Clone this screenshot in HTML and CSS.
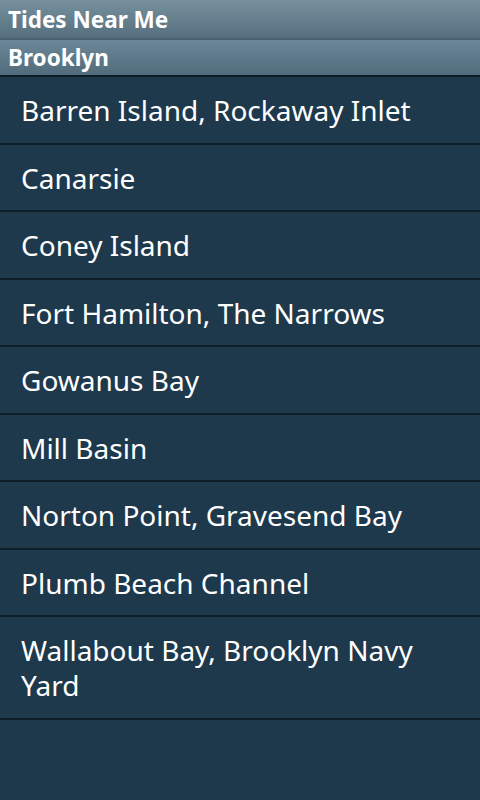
FILE: index.html
```html
<!DOCTYPE html>
<html>
<head>
<meta charset="utf-8">
<link rel="stylesheet" href="styles.css">
</head>
<body>
<div class="titlebar">Tides Near Me</div>
<div class="header">Brooklyn</div>
<ul class="list">
  <li>Barren Island, Rockaway Inlet</li>
  <li>Canarsie</li>
  <li>Coney Island</li>
  <li>Fort Hamilton, The Narrows</li>
  <li>Gowanus Bay</li>
  <li>Mill Basin</li>
  <li>Norton Point, Gravesend Bay</li>
  <li>Plumb Beach Channel</li>
  <li>Wallabout Bay, Brooklyn Navy Yard</li>
</ul>
</body>
</html>
```
FILE: styles.css
```css
html, body {
  margin: 0;
  padding: 0;
}
body {
  width: 480px;
  height: 800px;
  background: #1e384c;
  font-family: "Noto Sans", "Open Sans", sans-serif;
  color: #ffffff;
  overflow: hidden;
}
.titlebar {
  height: 40px;
  box-sizing: border-box;
  padding: 1px 0 0 8px;
  font-size: 22.5px;
  font-weight: bold;
  line-height: 37px;
  background: linear-gradient(#76909e, #566f7e);
  border-bottom: 2px solid #4c6270;
}
.header {
  height: 37px;
  box-sizing: border-box;
  padding: 2px 0 0 8px;
  font-size: 22.5px;
  font-weight: bold;
  line-height: 32px;
  background: linear-gradient(#6c8898, #516b7b);
  border-bottom: 2px solid #0c1a24;
}
.list {
  list-style: none;
  margin: 0;
  padding: 0;
}
.list li {
  box-sizing: border-box;
  padding: 16px 22px 14.5px 21px;
  font-size: 28px;
  line-height: 35px;
  border-bottom: 2px solid #0e1e28;
}
```
